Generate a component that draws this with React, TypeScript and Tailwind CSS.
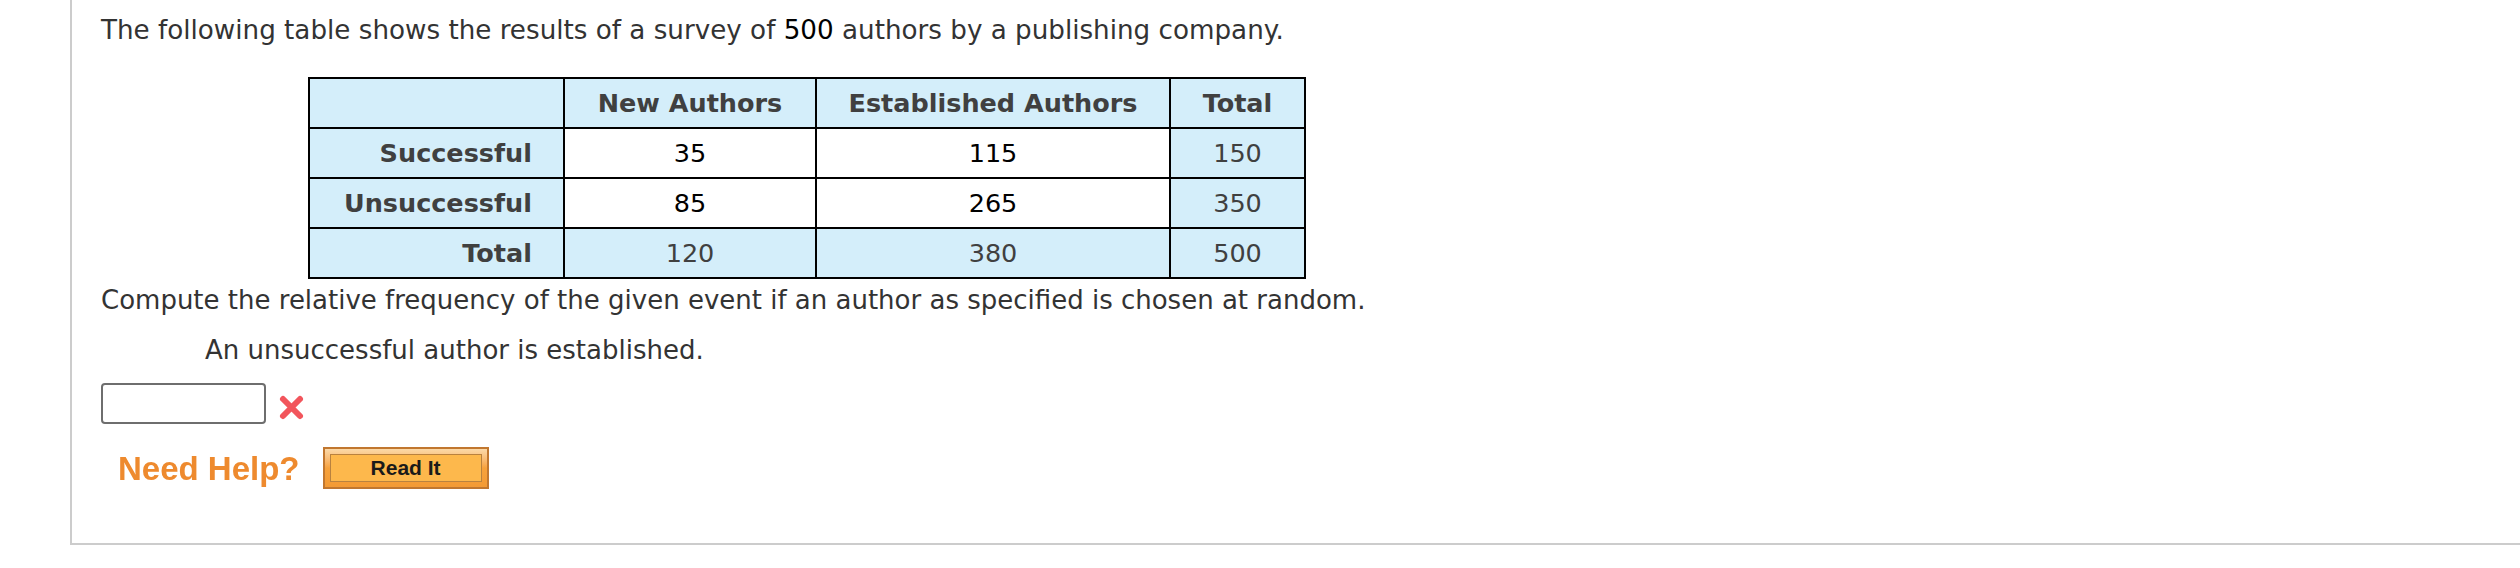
const rows = [
  { label: "Successful", newA: "35", est: "115", total: "150" },
  { label: "Unsuccessful", newA: "85", est: "265", total: "350" },
]

function RedX() {
  return (
    <svg width="27" height="27" viewBox="0 0 27 27" className="ml-[12px] mt-[11px] blur-[0.4px]">
      <path d="M5 5 L22 22 M22 5 L5 22" stroke="#f2555c" strokeWidth="6" strokeLinecap="round" />
    </svg>
  )
}

export default function App() {
  return (
    <div className="w-[2520px] h-[568px] bg-white overflow-hidden">
      <div
        className="ml-[70px] h-[545px] border-l-2 border-b-2 border-[#cccccc] pl-[29px] pt-[15px] text-[#333333]"
        style={{ fontFamily: '"DejaVu Sans", Verdana, sans-serif' }}
      >
        <p className="h-[30px] leading-[30px] text-[26.2px]">
          The following table shows the results of a survey of <span className="text-black">500</span> authors by a
          publishing company.
        </p>

        <table className="mt-[32px] ml-[207px] border-collapse border-2 border-black text-[25.5px]">
          <thead>
            <tr className="h-[50px]">
              <th className="w-[255px] border-2 border-black bg-[#d4eefa]"></th>
              <th className="w-[252px] border-2 border-black bg-[#d4eefa] font-bold text-[#404040]">New Authors</th>
              <th className="w-[354px] border-2 border-black bg-[#d4eefa] font-bold text-[#404040]">Established Authors</th>
              <th className="w-[135px] border-2 border-black bg-[#d4eefa] font-bold text-[#404040]">Total</th>
            </tr>
          </thead>
          <tbody>
            {rows.map((r) => (
              <tr key={r.label} className="h-[50px]">
                <td className="border-2 border-black bg-[#d4eefa] pr-[31px] text-right font-bold text-[#404040]">
                  {r.label}
                </td>
                <td className="border-2 border-black bg-white text-center text-black">{r.newA}</td>
                <td className="border-2 border-black bg-white text-center text-black">{r.est}</td>
                <td className="border-2 border-black bg-[#d4eefa] text-center text-[#404040]">{r.total}</td>
              </tr>
            ))}
            <tr className="h-[50px]">
              <td className="border-2 border-black bg-[#d4eefa] pr-[31px] text-right font-bold text-[#404040]">Total</td>
              <td className="border-2 border-black bg-[#d4eefa] text-center text-[#404040]">120</td>
              <td className="border-2 border-black bg-[#d4eefa] text-center text-[#404040]">380</td>
              <td className="border-2 border-black bg-[#d4eefa] text-center text-[#404040]">500</td>
            </tr>
          </tbody>
        </table>

        <p className="mt-[6px] h-[30px] leading-[30px] text-[26px]">
          Compute the relative frequency of the given event if an author as specified is chosen at random.
        </p>
        <p className="mt-[20px] pl-[104px] h-[30px] leading-[30px] text-[26px]">An unsuccessful author is established.</p>

        <div className="mt-[18px] flex items-start">
          <input
            type="text"
            className="w-[165px] h-[41px] rounded-[4px] border-2 border-[#6e6e6e] bg-white outline-none"
          />
          <RedX />
        </div>

        <div className="mt-[23px] flex items-center" style={{ fontFamily: '"Liberation Sans", Arial, sans-serif' }}>
          <span className="ml-[17px] text-[33px] font-bold leading-none text-[#ee8a2e] blur-[0.3px]">Need Help?</span>
          <button
            type="button"
            className="ml-[23px] w-[166px] h-[42px] border-2 border-[#c1772f] bg-gradient-to-b from-[#fbd9a8] via-[#f7a23c] to-[#f39a34] p-[5px]"
          >
            <span className="flex h-full w-full items-center justify-center border border-[#b9823f] bg-[#fdb84c] text-[21px] font-bold text-[#1a1a1a]">
              Read It
            </span>
          </button>
        </div>
      </div>
    </div>
  )
}
